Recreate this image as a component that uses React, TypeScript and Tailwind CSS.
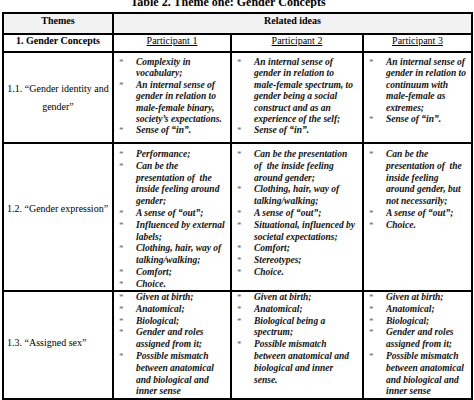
import React from 'react'

// Table 2 — Theme one: Gender Concepts

type Items = string[][]

const rows: {
  theme: React.ReactNode
  themeClass: string
  textClass: string
  cols: Items[]
}[] = [
  {
    theme: (
      <>
        1.1. “Gender identity and
        <br />
        gender”
      </>
    ),
    themeClass: 'items-center justify-center text-center leading-[18px]',
    textClass: 'leading-[11.4px] pt-[4px]',
    cols: [
      [
        ['Complexity in', 'vocabulary;'],
        ['An internal sense of', 'gender in relation to', 'male-female binary,', 'society’s expectations.'],
        ['Sense of “in”.'],
      ],
      [
        [
          'An internal sense of',
          'gender in relation to',
          'male-female spectrum, to',
          'gender being a social',
          'construct and as an',
          'experience of the self;',
        ],
        ['Sense of “in”.'],
      ],
      [
        ['An internal sense of', 'gender in relation to', 'continuum with', 'male-female as', 'extremes;'],
        ['Sense of “in”.'],
      ],
    ],
  },
  {
    theme: <>1.2. “Gender expression”</>,
    themeClass: 'items-center pl-[3px] pb-[16px] leading-[18px]',
    textClass: 'leading-[11.8px] pt-[5px]',
    cols: [
      [
        ['Performance;'],
        ['Can be the', 'presentation of  the', 'inside feeling around', 'gender;'],
        ['A sense of “out”;'],
        ['Influenced by external', 'labels;'],
        ['Clothing, hair, way of', 'talking/walking;'],
        ['Comfort;'],
        ['Choice.'],
      ],
      [
        ['Can be the presentation', 'of  the inside feeling', 'around gender;'],
        ['Clothing, hair, way of', 'talking/walking;'],
        ['A sense of “out”;'],
        ['Situational, influenced by', 'societal expectations;'],
        ['Comfort;'],
        ['Stereotypes;'],
        ['Choice.'],
      ],
      [
        ['Can be the', 'presentation of  the', 'inside feeling', 'around gender, but', 'not necessarily;'],
        ['A sense of “out”;'],
        ['Choice.'],
      ],
    ],
  },
  {
    theme: <>1.3. “Assigned sex”</>,
    themeClass: 'items-center pl-[3px] pb-[4px] leading-[18px]',
    textClass: 'leading-[11.8px] pt-0',
    cols: [
      [
        ['Given at birth;'],
        ['Anatomical;'],
        ['Biological;'],
        ['Gender and roles', 'assigned from it;'],
        ['Possible mismatch', 'between anatomical', 'and biological and', 'inner sense'],
      ],
      [
        ['Given at birth;'],
        ['Anatomical;'],
        ['Biological being a', 'spectrum;'],
        ['Possible mismatch', 'between anatomical and', 'biological and inner', 'sense.'],
      ],
      [
        ['Given at birth;'],
        ['Anatomical;'],
        ['Biological;'],
        ['Gender and roles', 'assigned from it;'],
        ['Possible mismatch', 'between anatomical', 'and biological and', 'inner sense'],
      ],
    ],
  },
]

function BulletCell({ items, textClass }: { items: Items; textClass: string }) {
  return (
    <div className={`bg-white overflow-hidden pl-[5px] ${textClass}`}>
      {items.map((lines, i) => (
        <div key={i} className="flex">
          <span className="w-[17px] shrink-0 text-[9px] text-[#666]">*</span>
          <div className="italic font-bold text-[9.5px] text-[#111] whitespace-nowrap">
            {lines.map((l, j) => (
              <div key={j} className="whitespace-pre">
                {l}
              </div>
            ))}
          </div>
        </div>
      ))}
    </div>
  )
}

export default function App() {
  return (
    <div className="w-[474px] h-[400px] bg-white overflow-hidden text-black font-['Liberation_Serif','Times_New_Roman',serif]">
      {/* caption, cut off at the top edge */}
      <div className="h-[8px] overflow-hidden flex items-end justify-center pr-[18px]">
        <span className="text-[12px] leading-[12px] font-bold whitespace-nowrap">
          Table 2. Theme one: Gender Concepts
        </span>
      </div>

      <div className="mt-[4px] ml-[2px] w-[471px] grid grid-cols-[108px_116px_130px_107px] grid-rows-[19px_16px_89px_146px_106px] gap-[2px] bg-black p-[2px] text-[10px]">
        {/* header */}
        <div className="bg-[#f2f2f2] text-center font-bold leading-[12px] pt-[1px]">Themes</div>
        <div className="col-span-3 bg-[#f2f2f2] text-center font-bold leading-[12px] pt-[1px]">
          Related ideas
        </div>

        <div className="bg-white text-center font-bold leading-[12px]">1. Gender Concepts</div>
        <div className="bg-white text-center leading-[12px]">
          <span className="underline">Participant 1</span>
        </div>
        <div className="bg-white text-center leading-[12px]">
          <span className="underline">Participant 2</span>
        </div>
        <div className="bg-white text-center leading-[12px]">
          <span className="underline">Participant 3</span>
        </div>

        {rows.map((row, i) => (
          <React.Fragment key={i}>
            <div className={`bg-white flex ${row.themeClass}`}>
              <div>{row.theme}</div>
            </div>
            {row.cols.map((items, c) => (
              <BulletCell key={c} items={items} textClass={row.textClass} />
            ))}
          </React.Fragment>
        ))}
      </div>
    </div>
  )
}
